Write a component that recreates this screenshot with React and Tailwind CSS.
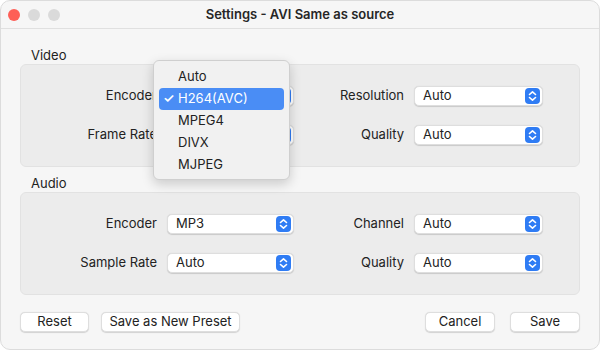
import React from 'react';

const FONT = { fontFamily: 'Inter, "Noto Sans", "Liberation Sans", sans-serif' };

function Stepper() {
  return (
    <div className="w-[15px] h-[16px] rounded-[4px] bg-[#2f7cf4] flex items-center justify-center shrink-0">
      <svg width="9" height="12" viewBox="0 0 9 12" fill="none" stroke="white" strokeWidth="1.6" strokeLinecap="round" strokeLinejoin="round">
        <path d="M1.5 4.5 L4.5 1.8 L7.5 4.5" />
        <path d="M1.5 7.5 L4.5 10.2 L7.5 7.5" />
      </svg>
    </div>
  );
}

function Select({ value, width }) {
  return (
    <div className={`${width} h-[20px] bg-white rounded-[5px] border border-[#dedede] shadow-[0_0.5px_1px_rgba(0,0,0,0.15)] flex items-center justify-between pl-[8px] pr-[2px]`}>
      <span className="text-[13px] text-[#222]">{value}</span>
      <Stepper />
    </div>
  );
}

function Row({ left, leftValue, right, rightValue }) {
  return (
    <div className="flex items-center h-[20px]">
      <div className="w-[146px] text-right text-[13px] text-[#222] pr-[10px]">{left}</div>
      <Select value={leftValue} width="w-[127px]" />
      <div className="w-[120px] text-right text-[13px] text-[#222] pr-[10px]">{right}</div>
      <Select value={rightValue} width="w-[129px]" />
    </div>
  );
}

function Group({ children }) {
  return (
    <div className="h-[103px] rounded-[6px] bg-[#ececec] border border-[#e2e2e2] flex flex-col justify-center gap-[19px]">
      {children}
    </div>
  );
}

function Button({ children, width }) {
  return (
    <button className={`${width} h-[20px] bg-white rounded-[5px] border border-[#dedede] shadow-[0_0.5px_1px_rgba(0,0,0,0.15)] text-[13px] text-[#222] flex items-center justify-center`}>
      {children}
    </button>
  );
}

const ENCODERS = ['Auto', 'H264(AVC)', 'MPEG4', 'DIVX', 'MJPEG'];

export default function App() {
  return (
    <div className="w-[600px] h-[350px] bg-white" style={FONT}>
      <div className="relative w-full h-full bg-[#f6f6f6] rounded-[10px] border border-[#dcdcdc] overflow-hidden flex flex-col">
        {/* title bar */}
        <div className="h-[28px] shrink-0 border-b border-[#e0e0e0] flex items-center relative">
          <div className="flex gap-[8px] pl-[7px]">
            <div className="w-[12px] h-[12px] rounded-full bg-[#fe5f57]" />
            <div className="w-[12px] h-[12px] rounded-full bg-[#dadada]" />
            <div className="w-[12px] h-[12px] rounded-full bg-[#dadada]" />
          </div>
          <div className="absolute inset-0 flex items-center justify-center text-[13px] font-semibold text-[#262626]">
            Settings - AVI Same as source
          </div>
        </div>

        <div className="px-[19px] pt-[18px]">
          <div className="text-[13px] text-[#222] pl-[11px] h-[17px] leading-[17px]">Video</div>
          <Group>
            {/* values of the left column sit under the open menu */}
            <Row left="Encoder" leftValue="" right="Resolution" rightValue="Auto" />
            <Row left="Frame Rate" leftValue="" right="Quality" rightValue="Auto" />
          </Group>

          <div className="text-[13px] text-[#222] pl-[11px] mt-[8px] h-[17px] leading-[17px]">Audio</div>
          <Group>
            <Row left="Encoder" leftValue="MP3" right="Channel" rightValue="Auto" />
            <Row left="Sample Rate" leftValue="Auto" right="Quality" rightValue="Auto" />
          </Group>

          <div className="flex items-center mt-[17px]">
            <div className="flex gap-[12px]">
              <Button width="w-[69px]">Reset</Button>
              <Button width="w-[139px]">Save as New Preset</Button>
            </div>
            <div className="flex gap-[15px] ml-auto">
              <Button width="w-[70px]">Cancel</Button>
              <Button width="w-[70px]">Save</Button>
            </div>
          </div>
        </div>

        {/* open encoder menu */}
        <div className="absolute left-[152px] top-[59px] w-[137px] h-[120px] rounded-[6px] bg-[#f1f1f1] border border-[#cfcfcf] shadow-[0_4px_12px_rgba(0,0,0,0.18)] pt-[5px] px-[5px]">
          {ENCODERS.map((e) => {
            const on = e === 'H264(AVC)';
            return (
              <div
                key={e}
                className={`h-[22px] rounded-[4px] flex items-center pl-[19px] relative text-[13px] ${on ? 'bg-[#4a8df5] text-white' : 'text-[#222]'}`}
              >
                {on && <span className="absolute left-[4px] text-[13px] font-semibold">✓</span>}
                {e}
              </div>
            );
          })}
        </div>
      </div>
    </div>
  );
}
